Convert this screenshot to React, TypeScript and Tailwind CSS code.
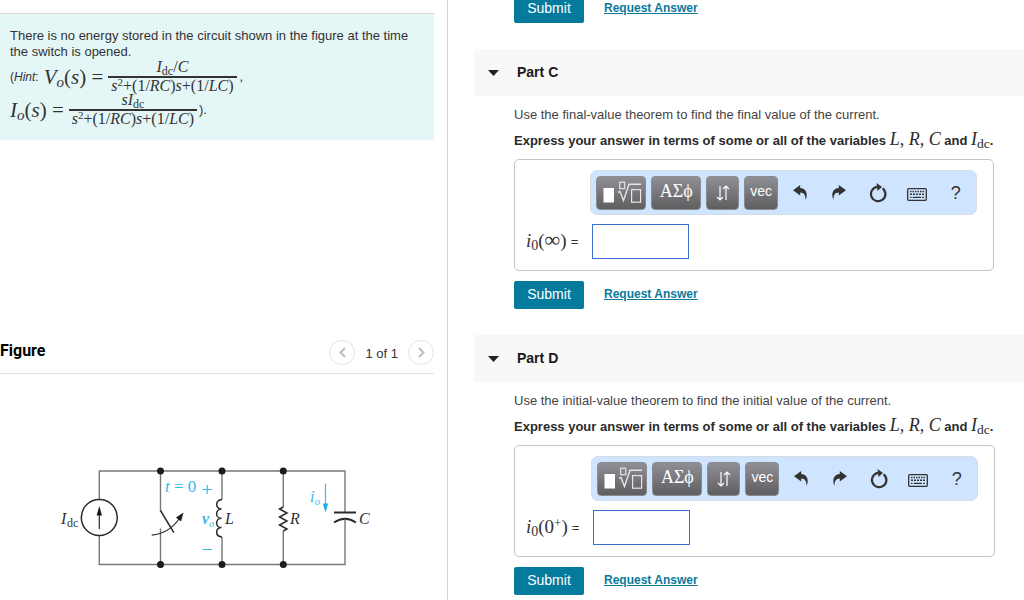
import React from 'react';

const sans = "font-['Liberation_Sans',Arial,sans-serif]";
const serif = "font-['Liberation_Serif','Times_New_Roman',serif]";

function Idc() {
  return (
    <span>
      <i>I</i>
      <sub className="bottom-[-3px] text-[75%]">dc</sub>
    </span>
  );
}

function Fraction({ top }: { top: React.ReactNode }) {
  return (
    <span className="inline-flex flex-col items-center text-[16px] leading-[16px]">
      <span className="h-4 pb-px leading-[14px]">{top}</span>
      <span className="h-[17px] w-full border-t-2 border-[#333] px-[3px] leading-[15px] whitespace-nowrap">
        <i>s</i>
        <sup className="top-[-5px] text-[11px]">2</sup>+(1/<i>RC</i>)<i>s</i>+(1/<i>LC</i>)
      </span>
    </span>
  );
}

function Circuit() {
  return (
    <svg
      className={`block h-[115px] w-[434px] ${serif}`}
      viewBox="0 460 434 115"
      fill="none"
      role="img"
      aria-label="Circuit diagram"
    >
      <g stroke="#777" strokeWidth="1.4">
        <path d="M99.3 500V471H345V512.5M345 520V564.5H99.3V536" />
        <path d="M160.5 471V511M160.5 528.5V564.5" />
        <path d="M222 471V499.5M222 537V564.5" />
        <path d="M283.3 471V507M283.3 531V564.5" />
      </g>
      <g stroke="#2b2b2b" strokeWidth="1.5">
        <circle cx="99.3" cy="517.5" r="18" />
        <path d="M99.3 529V513" strokeWidth="1.2" />
        <path d="M160.5 510.5L173.8 532.7" />
        <path d="M151.7 535.2C163 534 172 529 179 519" strokeWidth="1.2" />
        <path d="M222 499.5C215 500 215 509 221.5 509C215 509 215 518.3 221.5 518.3C215 518.3 215 527.6 221.5 527.6C215 527.6 215 536.5 222 537" />
        <path d="M283.3 507L279.5 509L287 513L279.5 517L287 521L279.5 525L287 529L283.3 531" />
        <path d="M334 512.5H356M334 522.5Q345 515 356 522.5" strokeWidth="1.8" />
      </g>
      <g fill="#1c1c1c">
        <path d="M99.3 506L102 515.5H96.6Z" />
        <path d="M183.5 512.5L181 521.5L176 517.5Z" />
        <circle cx="160.5" cy="471" r="3.5" />
        <circle cx="222" cy="471" r="3.5" />
        <circle cx="283.3" cy="471" r="3.5" />
        <circle cx="160.5" cy="564.5" r="3.5" />
        <circle cx="222" cy="564.5" r="3.5" />
        <circle cx="283.3" cy="564.5" r="3.5" />
      </g>
      <g stroke="#35bdf0" strokeWidth="1.2">
        <path d="M202.5 489.5H212M207.2 485V494M202.5 549.5H212" />
        <path d="M325.5 483.5V505" />
        <path d="M325.5 512.5L322.8 503.5H328.2Z" fill="#1eaeea" stroke="none" />
      </g>
      <g fill="#35b8ea" fontSize="16">
        <text x="165" y="492" fontSize="17"><tspan fontStyle="italic">t</tspan> = 0</text>
        <text x="202" y="524" fontStyle="italic" fontWeight="bold">v</text>
        <text x="209" y="527" fontStyle="italic" fontSize="10">o</text>
        <text x="310" y="502" fontStyle="italic">i</text>
        <text x="315" y="505" fontStyle="italic" fontSize="10">o</text>
      </g>
      <g fill="#333" fontSize="16" fontStyle="italic">
        <text x="61" y="524">I</text>
        <text x="67" y="527" fontSize="12" fontStyle="normal">dc</text>
        <text x="225" y="524">L</text>
        <text x="290" y="524">R</text>
        <text x="359" y="524">C</text>
      </g>
    </svg>
  );
}

const key =
  'flex h-[34px] items-center justify-center rounded-[4px] border border-[#8a8a8f] bg-linear-to-b from-[#8f8f97] to-[#5f5f61] text-white';
const action = 'flex h-[34px] w-[39px] items-center justify-center text-[#333]';

function Toolbar() {
  return (
    <div className="flex h-[45px] items-center rounded-[7px] border border-[#d5dde6] bg-[#cfe5ff] pr-px pl-[5px]">
      <div className="flex gap-[5px]">
        <button className={`${key} w-[50px]`} aria-label="Templates">
          <svg className="h-[32px] w-[48px] shrink-0" viewBox="1 1 48 32" fill="none" stroke="#e4e4e6" strokeWidth="1.2">
            <rect x="7.5" y="12" width="10.5" height="14.5" fill="#fff" stroke="none" />
            <rect x="23.7" y="6.2" width="5" height="6.5" />
            <path d="M22 16.3L24 15.5L27.5 24.5L33 8.2H45" strokeWidth="1.4" />
            <rect x="35.6" y="13.6" width="9" height="12.6" />
          </svg>
        </button>
        <button className={`${key} w-[50px] pb-1 ${serif} text-[18px] leading-none`}>ΑΣϕ</button>
        <button className={`${key} w-[33px]`} aria-label="Arrows">
          <svg className="h-[16px] w-[14px]" viewBox="0 0 14 16" fill="none" stroke="#fff" strokeWidth="1.2">
            <path d="M4 1V15M1 12L4 15L7 12M10 15V1M7 4L10 1L13 4" />
          </svg>
        </button>
        <button className={`${key} w-[34px] pb-1 text-[14px] leading-none`}>vec</button>
      </div>
      <div className="ml-0.5 flex">
        <button className={action} aria-label="Undo">
          <svg className="h-[15px] w-[14px]" viewBox="0 0 14 15" fill="currentColor">
            <path d="M0 5.2L7.2 0V3C12.5 3.2 15.4 8 12.6 15C12.6 10 11 7.8 7.2 7.6V10.6Z" />
          </svg>
        </button>
        <button className={action} aria-label="Redo">
          <svg className="h-[15px] w-[14px]" viewBox="0 0 14 15" fill="currentColor">
            <path d="M14 5.2L6.8 0V3C1.5 3.2 -1.4 8 1.4 15C1.4 10 3 7.8 6.8 7.6V10.6Z" />
          </svg>
        </button>
        <button className={action} aria-label="Reset">
          <svg className="h-[20px] w-[18px]" viewBox="0 0 18 20" fill="none" stroke="currentColor" strokeWidth="2.2">
            <path d="M13.6 5.3A7.2 7.2 0 1 1 8 3.9" />
            <path d="M7.5 0L13 3.9L8.5 8Z" fill="currentColor" stroke="none" />
          </svg>
        </button>
        <button className={action} aria-label="Keyboard">
          <svg className="mt-1 h-[13px] w-[20px]" viewBox="0 0 20 13" fill="none" stroke="currentColor">
            <rect x="0.7" y="0.7" width="18.6" height="11.6" rx="1" strokeWidth="1.3" />
            <path d="M3 3.5H17" strokeWidth="1.6" strokeDasharray="1.5 1" />
            <path d="M3 6.3H17" strokeWidth="1.6" strokeDasharray="2 1" />
            <path d="M3 9.4H4.5M5.7 9.4H14M15.2 9.4H17" strokeWidth="1.4" />
          </svg>
        </button>
        <button className={`${action} text-[18px] leading-none`} aria-label="Help">?</button>
      </div>
    </div>
  );
}

function SubmitRow() {
  return (
    <div className="flex items-center gap-5 pl-10">
      <button className="h-7 w-[70px] rounded-[2px] bg-[#047a9c] pb-px text-[14px] text-white">Submit</button>
      <a href="#" className="pb-0.5 text-[12px] leading-4 font-bold text-[#0a7a9c] underline">Request Answer</a>
    </div>
  );
}

interface PartProps {
  id: string;
  quantity: string;
  argument: React.ReactNode;
}

function Part({ id, quantity, argument }: PartProps) {
  return (
    <section className="mt-[26px]">
      <h2 className="bg-[#f8f8f8]">
        <button className="flex h-[47px] w-full items-center gap-[18px] pl-[14px] text-[14px] font-bold text-[#1a1a1a]">
          <svg className="h-[6px] w-[11px]" viewBox="0 0 11 6"><path d="M0 0H11L5.5 6Z" fill="#222" /></svg>
          Part {id}
        </button>
      </h2>
      <p className="mt-[11px] pl-10 text-[13px] leading-4 text-[#444]">
        Use the {quantity}-value theorem to find the {quantity} value of the current.
      </p>
      <p className="mt-[10px] h-4 pl-10 text-[13px] leading-4 font-bold whitespace-nowrap text-[#2b2b2b]">
        Express your answer in terms of some or all of the variables{' '}
        <span className={`${serif} text-[18px] leading-[0] font-normal`}><i>L</i>, <i>R</i>, <i>C</i></span> and{' '}
        <span className={`${serif} text-[18px] leading-[0] font-normal`}><Idc /></span>.
      </p>
      <div className="mt-[10px] ml-10 grid w-fit grid-cols-[auto_auto] gap-y-[9px] rounded-[5px] border border-[#c4c4c4] pt-[10px] pr-4 pb-[11px] pl-[11px]">
        <div className="col-start-2"><Toolbar /></div>
        <label htmlFor={`answer-${id}`} className="flex items-center gap-1 pr-3 text-[13px] text-[#333]">
          <span className={`${serif} pb-0.5 text-[19px] leading-none whitespace-nowrap`}>
            <i>i</i><sub className="bottom-[-3px] text-[14px]">0</sub>({argument})
          </span>
          =
        </label>
        <input id={`answer-${id}`} className="ml-0.5 h-[35px] w-[97px] border border-[#3b6fd4] bg-white px-2 outline-none" />
      </div>
      <div className="mt-[10px]"><SubmitRow /></div>
    </section>
  );
}

export default function App() {
  return (
    <div className={`flex min-h-screen overflow-hidden bg-white ${sans}`}>
      <aside className="w-[43.75%] shrink-0 border-r border-[#cdd7df] pt-[13px] pr-[13px]">
        <div className="border-t border-[#d3dcdd] bg-[#e5f6f6] px-[10px] pt-[14px] pb-[14px] text-[13px] leading-4 text-[#333]">
          <p>There is no energy stored in the circuit shown in the figure at the time the switch is opened.</p>
          <div className="flex h-[33px] items-center">
            <span className="mr-[5px] text-[12px]">(<i>Hint</i>:</span>
            <span className={`${serif} flex items-center gap-[5px] text-[21px]`}>
              <span><i>V</i><sub className="bottom-[-3px] text-[15px]"><i>o</i></sub>(<i>s</i>) =</span>
              <Fraction top={<><Idc />/<i>C</i></>} />
            </span>
            <span className="ml-[3px]">,</span>
          </div>
          <div className="flex h-[33px] items-center">
            <span className={`${serif} flex items-center gap-[5px] text-[21px]`}>
              <span><i>I</i><sub className="bottom-[-3px] text-[15px]"><i>o</i></sub>(<i>s</i>) =</span>
              <Fraction top={<><i>s</i><Idc /></>} />
            </span>
            <span className="ml-0.5">).</span>
          </div>
        </div>
        <div className="mt-[200px] flex h-[34px] items-start justify-between border-b border-[#e0e0e0]">
          <h2 className="font-['Roboto',sans-serif] text-[16px] leading-[21px] font-bold text-black">Figure</h2>
          <div className="flex items-center gap-[10px] text-[13px] text-[#333]">
            <button aria-label="Previous figure" className="flex h-[25px] w-[26px] items-center justify-center rounded-full border border-[#e4e4e4]">
              <svg className="h-[11px] w-[7px]" viewBox="0 0 7 11" fill="none" stroke="#bbb" strokeWidth="1.8"><path d="M6 1L1.5 5.5L6 10" /></svg>
            </button>
            <span className="pt-[3px]">1 of 1</span>
            <button aria-label="Next figure" className="flex h-[25px] w-[26px] items-center justify-center rounded-full border border-[#e4e4e4]">
              <svg className="h-[11px] w-[7px]" viewBox="0 0 7 11" fill="none" stroke="#bbb" strokeWidth="1.8"><path d="M1 1L5.5 5.5L1 10" /></svg>
            </button>
          </div>
        </div>
        <div className="mt-[86px]"><Circuit /></div>
      </aside>
      <main className="min-w-0 flex-1 pb-1 pl-[26px]">
        <div className="-mt-[5px]"><SubmitRow /></div>
        <Part id="C" quantity="final" argument={<span className="text-[22px] leading-[0]">∞</span>} />
        <Part id="D" quantity="initial" argument={<>0<sup className="top-[-6px] text-[13px]">+</sup></>} />
      </main>
    </div>
  );
}
